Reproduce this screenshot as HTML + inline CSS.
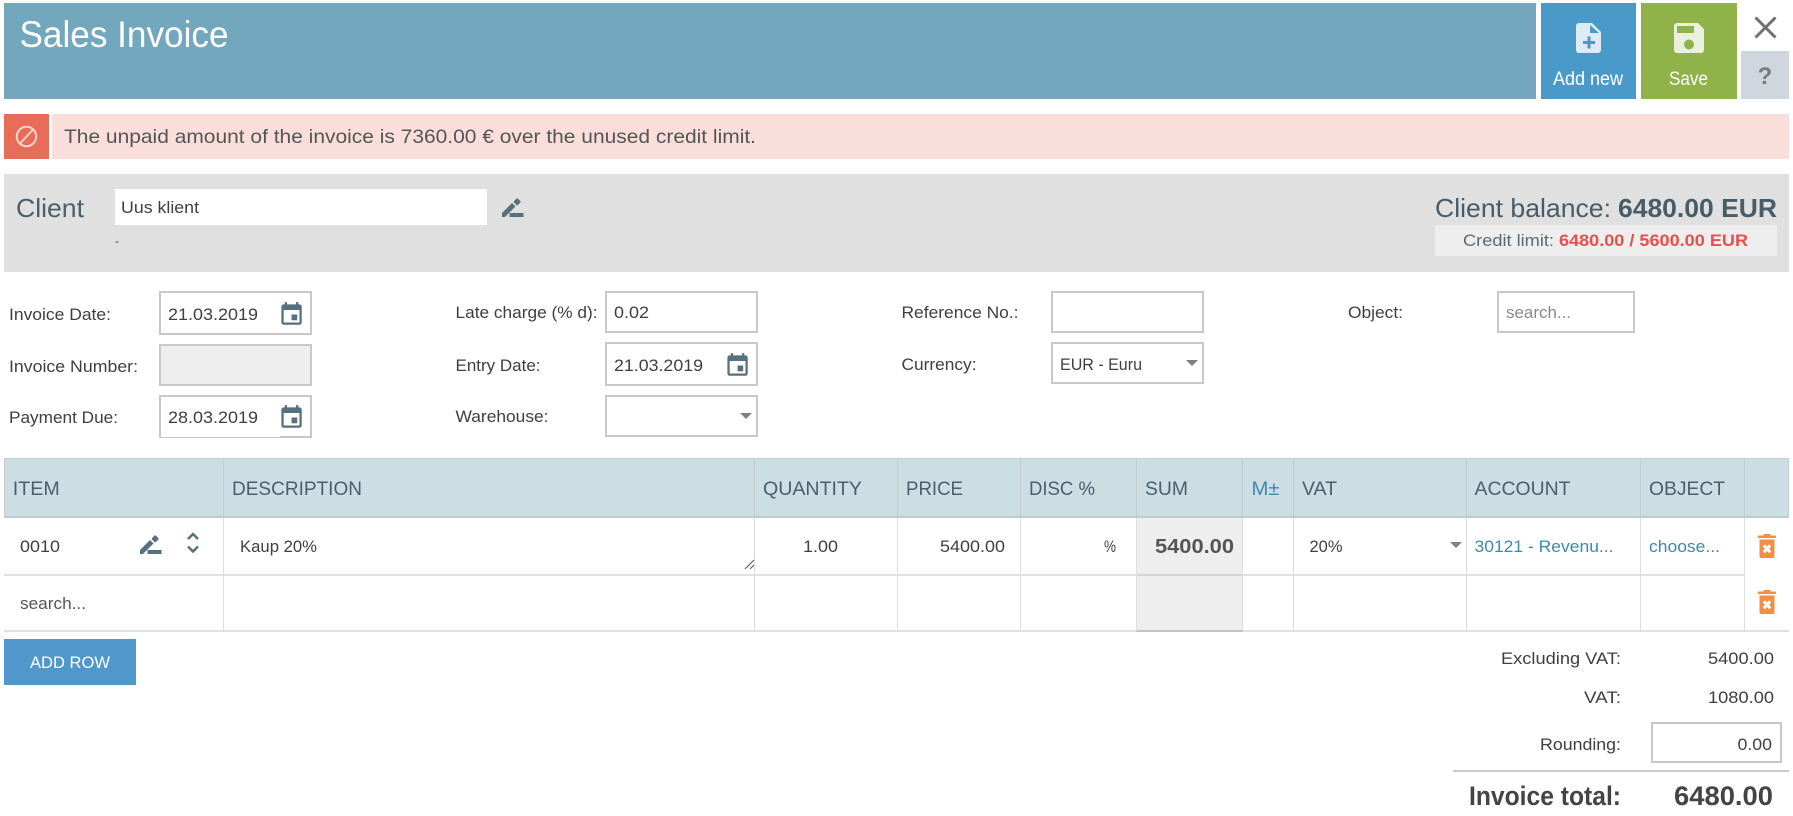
<!DOCTYPE html>
<html lang="en">
<head>
<meta charset="utf-8">
<title>Sales Invoice</title>
<style>
html,body{margin:0;padding:0;background:#fff;width:1793px;height:816px;overflow:hidden}
div{position:absolute;box-sizing:border-box}
svg{position:absolute;left:0;top:0;overflow:visible}
text{font-family:"Liberation Sans",sans-serif;font-size:17px;fill:#3f3f3f}
.i{border:2px solid #c8c8c8;background:#fff}
.c{background:#dcdfe0;width:1px;top:518px;height:113px}
.h{background:#c2ccd1;width:1px;top:458px;height:60px}
.th{font-size:19px;fill:#4a5f6b}
.lnk{fill:#3f88ae;font-size:17px}
.b{font-weight:bold}
.ic{fill:#56707d}
</style>
</head>
<body>
<div style="left:4px;top:3px;width:1532px;height:96px;background:#72a7bd"></div>
<div style="left:1541px;top:3px;width:95px;height:96px;background:#4a9ac9"></div>
<div style="left:1641px;top:3px;width:96px;height:96px;background:#8fb349"></div>
<div style="left:1741px;top:51px;width:48px;height:48px;background:#cfd6de"></div>

<div style="left:4px;top:114px;width:45px;height:45px;background:#e76d59"></div>
<div style="left:52px;top:114px;width:1737px;height:45px;background:#f9dedb"></div>

<div style="left:4px;top:174px;width:1785px;height:98px;background:#e0e0e0"></div>
<div style="left:115px;top:189px;width:372px;height:36px;background:#fff"></div>
<div style="left:1435px;top:225px;width:342px;height:31px;background:#eee"></div>

<div class="i" style="left:159px;top:291px;width:153px;height:44px"></div>
<div class="i" style="left:159px;top:344px;width:153px;height:42px;background:#eee"></div>
<div class="i" style="left:159px;top:395px;width:153px;height:43px"></div>
<div style="left:161px;top:436px;width:119px;height:1px;background:#fff"></div>
<div class="i" style="left:605px;top:291px;width:153px;height:42px"></div>
<div class="i" style="left:605px;top:342px;width:153px;height:44px"></div>
<div class="i" style="left:605px;top:395px;width:153px;height:42px"></div>
<div class="i" style="left:1051px;top:291px;width:153px;height:42px"></div>
<div class="i" style="left:1051px;top:342px;width:153px;height:42px"></div>
<div class="i" style="left:1497px;top:291px;width:138px;height:42px"></div>

<div style="left:4px;top:458px;width:1785px;height:60px;background:#ccdde4;border:1px solid #c2ccd1;border-bottom:2px solid #bfcbd1"></div>
<div class="h" style="left:223px"></div><div class="h" style="left:754px"></div><div class="h" style="left:897px"></div><div class="h" style="left:1020px"></div><div class="h" style="left:1136px"></div><div class="h" style="left:1242px"></div><div class="h" style="left:1293px"></div><div class="h" style="left:1466px"></div><div class="h" style="left:1640px"></div><div class="h" style="left:1744px"></div>

<div style="left:1136px;top:518px;width:107px;height:113px;background:#eee"></div>
<div style="left:4px;top:574px;width:1740px;height:2px;background:#e0e0e0"></div>
<div style="left:4px;top:630px;width:1785px;height:2px;background:#e0e0e0"></div>
<div style="left:1136px;top:574px;width:107px;height:2px;background:#d4d4d4"></div>
<div style="left:1136px;top:630px;width:107px;height:2px;background:#c4c4c4"></div>
<div class="c" style="left:223px"></div><div class="c" style="left:754px"></div><div class="c" style="left:897px"></div><div class="c" style="left:1020px"></div><div class="c" style="left:1136px"></div><div class="c" style="left:1242px"></div><div class="c" style="left:1293px"></div><div class="c" style="left:1466px"></div><div class="c" style="left:1640px"></div><div class="c" style="left:1744px"></div>

<div style="left:4px;top:639px;width:132px;height:46px;background:#5097cb"></div>
<div style="left:1651px;top:722px;width:131px;height:41px;border:2px solid #c8c8c8;background:#fff"></div>
<div style="left:1453px;top:770px;width:336px;height:2px;background:#ccc"></div>

<svg width="1793" height="816" viewBox="0 0 1793 816" xmlns="http://www.w3.org/2000/svg">
<text x="19.500" y="47" style="font-size:37px;fill:#fff" textLength="209" lengthAdjust="spacingAndGlyphs">Sales Invoice</text>
<text x="1553" y="85" style="font-size:19px;fill:#fff" textLength="70" lengthAdjust="spacingAndGlyphs">Add new</text>
<text x="1669" y="85" style="font-size:19px;fill:#fff" textLength="39" lengthAdjust="spacingAndGlyphs">Save</text>
<text x="1765" y="84" text-anchor="middle" class="b" style="font-size:24px;fill:#7a7a7a">?</text>

<path d="M1579 23h13l9 9v18a3 3 0 0 1-3 3h-19a3 3 0 0 1-3-3V26a3 3 0 0 1 3-3z" fill="#dcebf4"/>
<path d="M1590 25v8h9z" fill="#4a9ac9"/>
<path d="M1583 42.500h12M1589 36.500v12" stroke="#4a9ac9" stroke-width="3" fill="none"/>
<path d="M1677 23h21l6 6v21a3 3 0 0 1-3 3h-24a3 3 0 0 1-3-3V26a3 3 0 0 1 3-3z" fill="#e9f0dd"/>
<rect x="1677" y="26" width="17" height="7" fill="#8fb349"/>
<circle cx="1689" cy="44.500" r="5" fill="#8fb349"/>
<path d="M1755.500 17.500l20 20M1775.500 17.500l-20 20" stroke="#707070" stroke-width="3" fill="none"/>

<circle cx="26.500" cy="136.500" r="9.700" fill="none" stroke="#f9d3cd" stroke-width="2"/>
<path d="M20 143.500l13-14" stroke="#f9d3cd" stroke-width="2" fill="none"/>
<text x="64" y="143" style="font-size:19.500px;fill:#555" textLength="692" lengthAdjust="spacingAndGlyphs">The unpaid amount of the invoice is 7360.00 € over the unused credit limit.</text>

<text x="16" y="217" style="font-size:26px;fill:#4a5f6b" textLength="68" lengthAdjust="spacingAndGlyphs">Client</text>
<text x="121" y="213" textLength="78" lengthAdjust="spacingAndGlyphs">Uus klient</text>
<text x="115" y="245" style="font-size:12px">-</text>
<g class="ic" transform="translate(502 199)"><path d="M0 18v-4L10 4l3.500 3.500L3 18z"/><rect x="12.500" y="0" width="5.500" height="5.500" rx="1" transform="rotate(45 15.200 2.700)"/><rect x="7.500" y="14" width="14" height="4"/></g>
<text x="1435" y="217" style="font-size:26px;fill:#475b68" textLength="176" lengthAdjust="spacingAndGlyphs">Client balance:</text>
<text x="1618" y="217" class="b" style="font-size:26px;fill:#475b68" textLength="159" lengthAdjust="spacingAndGlyphs">6480.00 EUR</text>
<text x="1463" y="246" style="fill:#5b6b75" textLength="91" lengthAdjust="spacingAndGlyphs">Credit limit:</text>
<text x="1559" y="246" class="b" style="fill:#ea4f4f" textLength="189" lengthAdjust="spacingAndGlyphs">6480.00 / 5600.00 EUR</text>

<text x="9" y="320" textLength="102" lengthAdjust="spacingAndGlyphs">Invoice Date:</text>
<text x="9" y="372" textLength="129" lengthAdjust="spacingAndGlyphs">Invoice Number:</text>
<text x="9" y="423" textLength="109" lengthAdjust="spacingAndGlyphs">Payment Due:</text>
<text x="168" y="320" textLength="90" lengthAdjust="spacingAndGlyphs">21.03.2019</text>
<text x="168" y="423" textLength="90" lengthAdjust="spacingAndGlyphs">28.03.2019</text>
<text x="455.500" y="318" textLength="142" lengthAdjust="spacingAndGlyphs">Late charge (% d):</text>
<text x="455.500" y="371" textLength="85" lengthAdjust="spacingAndGlyphs">Entry Date:</text>
<text x="455.500" y="422" textLength="93" lengthAdjust="spacingAndGlyphs">Warehouse:</text>
<text x="614" y="318" textLength="35" lengthAdjust="spacingAndGlyphs">0.02</text>
<text x="614" y="371" textLength="89" lengthAdjust="spacingAndGlyphs">21.03.2019</text>
<text x="901.500" y="318" textLength="117" lengthAdjust="spacingAndGlyphs">Reference No.:</text>
<text x="901.500" y="370" textLength="75" lengthAdjust="spacingAndGlyphs">Currency:</text>
<text x="1060" y="370" textLength="82" lengthAdjust="spacingAndGlyphs">EUR - Euru</text>
<text x="1348" y="318" textLength="55" lengthAdjust="spacingAndGlyphs">Object:</text>
<text x="1506" y="318" style="fill:#8a8a8a" textLength="65" lengthAdjust="spacingAndGlyphs">search...</text>

<g class="ic">
<path transform="translate(278 301) scale(1.130)" d="M17 12h-5v5h5v-5zM16 1v2H8V1H6v2H5c-1.110 0-1.990.9-1.990 2L3 19c0 1.100.89 2 2 2h14c1.100 0 2-.9 2-2V5c0-1.100-.9-2-2-2h-1V1h-2zm3 18H5V8h14v11z"/>
<path transform="translate(278 404) scale(1.130)" d="M17 12h-5v5h5v-5zM16 1v2H8V1H6v2H5c-1.110 0-1.990.9-1.990 2L3 19c0 1.100.89 2 2 2h14c1.100 0 2-.9 2-2V5c0-1.100-.9-2-2-2h-1V1h-2zm3 18H5V8h14v11z"/>
<path transform="translate(724 352) scale(1.130)" d="M17 12h-5v5h5v-5zM16 1v2H8V1H6v2H5c-1.110 0-1.990.9-1.990 2L3 19c0 1.100.89 2 2 2h14c1.100 0 2-.9 2-2V5c0-1.100-.9-2-2-2h-1V1h-2zm3 18H5V8h14v11z"/>
</g>
<path d="M740 413h12l-6 6zM1186 360h12l-6 6zM1450 542h12l-6 6z" fill="#808080"/>

<text x="12.800" y="495" class="th" textLength="47" lengthAdjust="spacingAndGlyphs">ITEM</text>
<text x="232" y="495" class="th" textLength="130" lengthAdjust="spacingAndGlyphs">DESCRIPTION</text>
<text x="763" y="495" class="th" textLength="99" lengthAdjust="spacingAndGlyphs">QUANTITY</text>
<text x="906" y="495" class="th" textLength="57" lengthAdjust="spacingAndGlyphs">PRICE</text>
<text x="1029" y="495" class="th" textLength="66" lengthAdjust="spacingAndGlyphs">DISC %</text>
<text x="1145" y="495" class="th" textLength="43" lengthAdjust="spacingAndGlyphs">SUM</text>
<text x="1251.500" y="495" class="th" style="fill:#3f88ae" textLength="28" lengthAdjust="spacingAndGlyphs">M±</text>
<text x="1302" y="495" class="th" textLength="35" lengthAdjust="spacingAndGlyphs">VAT</text>
<text x="1474.500" y="495" class="th" textLength="96" lengthAdjust="spacingAndGlyphs">ACCOUNT</text>
<text x="1649" y="495" class="th" textLength="76" lengthAdjust="spacingAndGlyphs">OBJECT</text>

<text x="20" y="552" textLength="40" lengthAdjust="spacingAndGlyphs">0010</text>
<g class="ic" transform="translate(140 536)"><path d="M0 18v-4L10 4l3.500 3.500L3 18z"/><rect x="12.500" y="0" width="5.500" height="5.500" rx="1" transform="rotate(45 15.200 2.700)"/><rect x="7.500" y="14" width="14" height="4"/></g>
<path d="M188 539l5-5 5 5M188 546.500l5 5 5-5" stroke="#56707d" stroke-width="2.500" fill="none"/>
<text x="240" y="552" textLength="77" lengthAdjust="spacingAndGlyphs">Kaup 20%</text>
<path d="M745 569l9-9M750 569l4-4" stroke="#555" stroke-width="1" fill="none"/>
<text x="803" y="552" textLength="35" lengthAdjust="spacingAndGlyphs">1.00</text>
<text x="940" y="552" textLength="65" lengthAdjust="spacingAndGlyphs">5400.00</text>
<text x="1104" y="552" textLength="12" lengthAdjust="spacingAndGlyphs">%</text>
<text x="1155" y="553" class="b" style="font-size:20.500px;fill:#555" textLength="79" lengthAdjust="spacingAndGlyphs">5400.00</text>
<text x="1309.500" y="552" textLength="33" lengthAdjust="spacingAndGlyphs">20%</text>
<text x="1474.500" y="552" class="lnk" textLength="139" lengthAdjust="spacingAndGlyphs">30121 - Revenu...</text>
<text x="1649" y="552" class="lnk" textLength="71" lengthAdjust="spacingAndGlyphs">choose...</text>
<text x="20" y="609" style="fill:#555" textLength="66" lengthAdjust="spacingAndGlyphs">search...</text>

<g transform="translate(1758 534)"><path d="M0 1.500h5.500V0h7v1.500H18V4H0z" fill="#f48f42"/><path d="M1.500 5.500h15v16.500a2 2 0 0 1-2 2h-11a2 2 0 0 1-2-2z" fill="#f48f42"/><path d="M5.800 11.300l6.400 6.900M12.200 11.300l-6.400 6.900" stroke="#fff" stroke-width="3" fill="none"/></g>
<g transform="translate(1758 590)"><path d="M0 1.500h5.500V0h7v1.500H18V4H0z" fill="#f48f42"/><path d="M1.500 5.500h15v16.500a2 2 0 0 1-2 2h-11a2 2 0 0 1-2-2z" fill="#f48f42"/><path d="M5.800 11.300l6.400 6.900M12.200 11.300l-6.400 6.900" stroke="#fff" stroke-width="3" fill="none"/></g>

<text x="30" y="668" style="fill:#fff" textLength="80" lengthAdjust="spacingAndGlyphs">ADD ROW</text>

<text x="1501" y="664" textLength="120" lengthAdjust="spacingAndGlyphs">Excluding VAT:</text>
<text x="1708" y="664" textLength="66" lengthAdjust="spacingAndGlyphs">5400.00</text>
<text x="1584" y="703" textLength="37" lengthAdjust="spacingAndGlyphs">VAT:</text>
<text x="1708" y="703" textLength="66" lengthAdjust="spacingAndGlyphs">1080.00</text>
<text x="1540" y="750" textLength="81" lengthAdjust="spacingAndGlyphs">Rounding:</text>
<text x="1737.500" y="750" textLength="34.500" lengthAdjust="spacingAndGlyphs">0.00</text>
<text x="1469" y="805" class="b" style="font-size:27px;fill:#444" textLength="152" lengthAdjust="spacingAndGlyphs">Invoice total:</text>
<text x="1674" y="805" class="b" style="font-size:27px;fill:#444" textLength="99" lengthAdjust="spacingAndGlyphs">6480.00</text>
</svg>
</body>
</html>
